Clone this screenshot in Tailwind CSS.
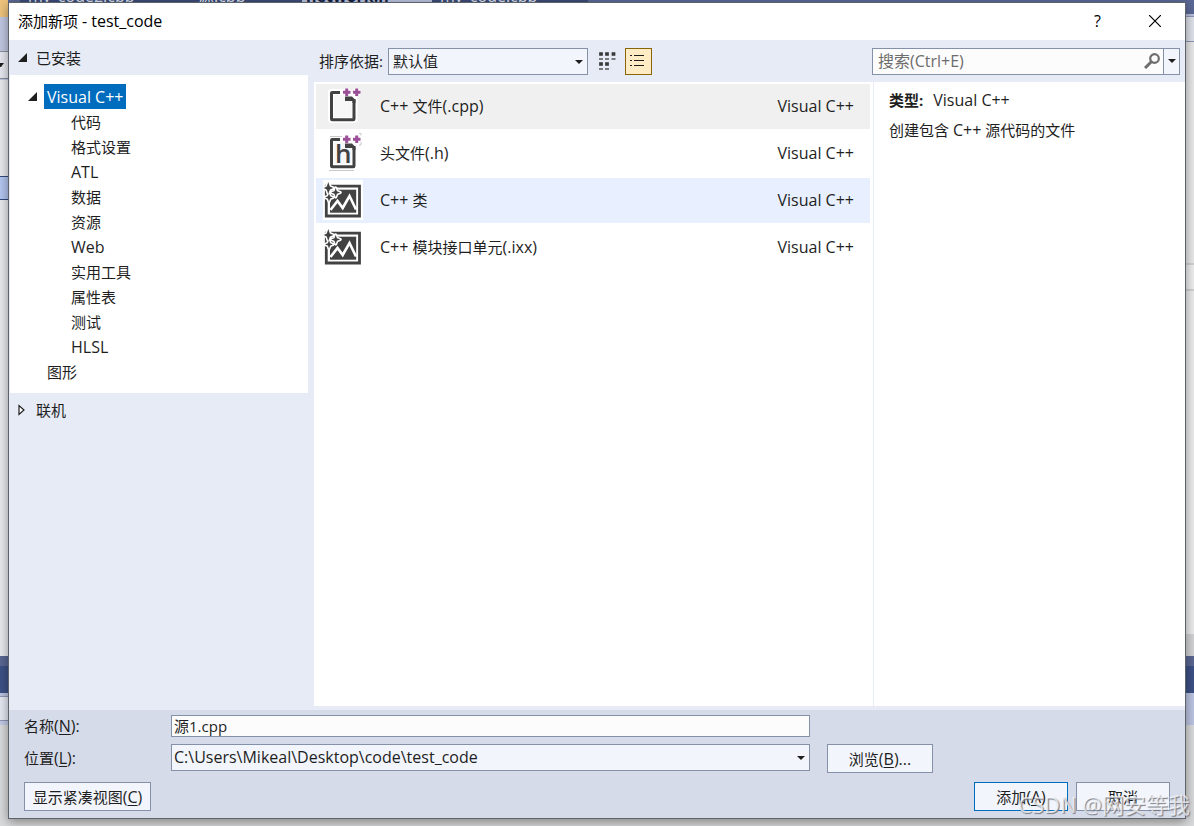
<!DOCTYPE html>
<html lang="zh-CN">
<head>
  <meta charset="UTF-8" />
  <meta name="viewport" content="width=device-width, initial-scale=1.0"/>
  <title>添加新项 - test_code</title>
  <script src="https://cdn.jsdelivr.net/npm/@tailwindcss/browser@4"></script>
</head>
<body class="relative flex h-screen flex-col overflow-hidden bg-[#d9dadb] font-['Open_Sans','Noto_Sans_CJK_SC',sans-serif] text-[15px] leading-5 text-[#1e1e1e]">

  <!-- Shared icons -->
  <svg class="hidden">
    <symbol id="plusplus" viewBox="0 0 40 40">
      <path d="M20 6.300h7.500M23.700 2.500v7.500M30 6.300h7.500M33.700 2.500v7.500" stroke="#fff" stroke-width="5.500"/>
      <path d="M20 6.300h7.500M23.700 2.500v7.500M30 6.300h7.500M33.700 2.500v7.500" stroke="#9b4f96" stroke-width="3"/>
    </symbol>
    <symbol id="page" viewBox="0 0 40 40">
      <path d="M8 6H25L31.500 13V34H8Z" fill="#f7f7f7" stroke="#fff" stroke-width="6" stroke-linejoin="round"/>
      <path d="M17 6.500H9.200Q8.500 6.500 8.500 7.200V33Q8.500 33.700 9.200 33.700H30.300Q31 33.700 31 33V13" fill="none" stroke="#424242" stroke-width="3"/>
      <path d="M22 10.500H29L32.500 14V17H29.500V15H22Z" fill="#424242"/>
    </symbol>
    <symbol id="picture" viewBox="0 0 40 40">
      <path d="M0 0H40V40H0Z" fill="#fff"/>
      <path d="M3.300 6.200H36.500V36H3.300Z" fill="#fff" stroke="#424242" stroke-width="2.800"/>
      <path d="M7 9.700H33.200V32.700H7Z" fill="#424242"/>
      <path d="M7.500 30L14.500 21L19.700 28L26.500 16L33 29.500" fill="none" stroke="#fff" stroke-width="2.600"/>
      <path d="M5.300 2L6.800 6.500L10.300 8L6.800 9.500L5.300 14L3.800 9.500L.8 8L3.800 6.500ZM12.700 8L13.900 11.300L17.200 12.500L13.900 13.700L12.700 17L11.500 13.700L8.200 12.500L11.500 11.300ZM6 13.500L7.100 16.300L9.900 17.400L7.100 18.500L6 21.500L4.900 18.500L2.100 17.400L4.900 16.300Z" fill="#fff" stroke="#fff" stroke-width="3.200" stroke-linejoin="round"/>
      <path d="M5.300 2L6.800 6.500L10.300 8L6.800 9.500L5.300 14L3.800 9.500L.8 8L3.800 6.500ZM12.700 8L13.900 11.300L17.200 12.500L13.900 13.700L12.700 17L11.500 13.700L8.200 12.500L11.500 11.300ZM6 13.500L7.100 16.300L9.900 17.400L7.100 18.500L6 21.500L4.900 18.500L2.100 17.400L4.900 16.300Z" fill="#424242"/>
    </symbol>
    <symbol id="arrow" viewBox="0 0 8 4"><path d="M0 0H8L4 4Z" fill="#1e1e1e"/></symbol>
    <symbol id="expanded" viewBox="0 0 10 10"><path d="M9 0V9H0Z" fill="#1e1e1e"/></symbol>
  </svg>

  <!-- Editor tabs behind the dialog -->
  <div class="flex h-[2px] shrink-0 items-end overflow-hidden bg-[#5a6896] text-base leading-3 text-[#dfe3f0]">
    <div class="h-3 w-2 bg-[#eec37c]"></div>
    <div class="ml-3 flex h-3 w-[170px] bg-[#3b4a78] pl-2">my_code2.cpp</div>
    <div class="flex h-3 w-[112px] bg-[#3b4a78] pl-2">源.cpp</div>
    <div class="flex h-3 w-[130px] bg-[#b8c0dd] pl-1 font-bold text-[#14203f]">network.h ×</div>
    <div class="flex h-3 w-[156px] bg-[#3b4a78] pl-2">my_code.cpp</div>
  </div>

  <div class="flex min-h-0 flex-1">
    <!-- Left edge of the editor -->
    <div class="flex w-2 shrink-0 flex-col bg-[#d9dadb]">
      <div class="h-[15px] bg-[#eec37c]"></div>
      <div class="h-[34px] bg-[#c0c8e2]"></div>
      <div class="flex h-7 items-center border-y border-[#8c909c] bg-[#e6e9f0]"><svg class="h-1 w-1" viewBox="0 0 4 4"><path d="M0 0H4L1 4H0Z" fill="#1e1e1e"/></svg></div>
      <div class="h-[97px] border-t border-[#c0c8e2] bg-[#e9eaed]"></div>
      <div class="h-6 border-y border-[#34497d] bg-[#b4c6f0]"></div>
      <div class="flex-1 bg-[#e9eaed]"></div>
      <div class="h-[10px] bg-[#5a6793]"></div>
      <div class="h-[27px] bg-[#3d5186]"></div>
      <div class="h-[3px] bg-[#b9c2e0]"></div>
      <div class="h-[25px] border-y border-[#8c95b5] bg-[#e4e8f2]"></div>
      <div class="h-1 bg-[#c2c9e6]"></div>
      <div class="h-[94px]"></div>
    </div>

    <!-- Dialog -->
    <main class="z-10 flex min-w-0 flex-1 flex-col border border-[#5e6269] bg-[#e6ebf5] shadow-[0_3px_10px_rgba(0,0,0,0.4)]">
      <header class="flex h-[37px] shrink-0 items-center bg-white pb-[2px] pl-[9px] text-black">
        <h1 class="flex-1">添加新项 <span class="text-base leading-5">- test_code</span></h1>
        <button aria-label="帮助" class="w-[57px] text-base">?</button>
        <button aria-label="关闭" class="flex w-[58px] justify-center">
          <svg class="size-3" viewBox="0 0 12 12"><path d="M0 0L12 12M12 0L0 12" stroke="#000" stroke-width="1.200"/></svg>
        </button>
        <span class="w-px"></span>
      </header>

      <section class="flex min-h-0 flex-1 pb-1">
        <!-- Categories -->
        <nav class="w-[299px] shrink-0">
          <button class="flex h-[35px] w-full items-center gap-2 pl-[9px]"><svg class="size-[10px]"><use href="#expanded"/></svg>已安装</button>
          <div class="ml-px bg-white py-[9px]">
            <button class="flex h-[25px] items-center gap-[6px] pl-[18px]">
              <svg class="size-[10px]"><use href="#expanded"/></svg>
              <span class="h-[25px] bg-[#006cbe] px-[3px] text-base leading-[26px] text-white">Visual C++</span>
            </button>
            <ul class="pl-[61px] leading-[26px]">
              <li class="h-[25px]">代码</li>
              <li class="h-[25px]">格式设置</li>
              <li class="h-[25px] text-base leading-[27px]">ATL</li>
              <li class="h-[25px]">数据</li>
              <li class="h-[25px]">资源</li>
              <li class="h-[25px] text-base leading-[27px]">Web</li>
              <li class="h-[25px]">实用工具</li>
              <li class="h-[25px]">属性表</li>
              <li class="h-[25px]">测试</li>
              <li class="h-[25px] text-base leading-[27px]">HLSL</li>
            </ul>
            <p class="h-[25px] pl-[37px] leading-[26px]">图形</p>
          </div>
          <button class="flex h-[33px] w-full items-center gap-[10px] pl-[9px]">
            <svg class="h-3 w-2" viewBox="0 0 8 12"><path d="M1 1.500V10.500L6 6Z" fill="#fff" stroke="#1e1e1e" stroke-width="1.200"/></svg>联机
          </button>
        </nav>

        <!-- Templates -->
        <div class="ml-[6px] flex min-w-0 flex-1 flex-col">
          <div class="flex h-[42px] shrink-0 items-center pl-[5px]">
            <label for="sort" class="mr-[5px]">排序依据:</label>
            <div class="relative">
              <select id="sort" class="block h-[27px] w-[200px] appearance-none border border-[#8591a8] bg-[#f2f5fc] pl-1 leading-[25px]"><option>默认值</option></select>
              <svg class="pointer-events-none absolute top-[12px] right-[5px] h-1 w-2"><use href="#arrow"/></svg>
            </div>
            <button aria-label="中等图标" class="ml-[10px]">
              <svg class="h-5 w-[19px]" viewBox="0 0 19 20">
                <path d="M2 2h2v2H2ZM8 2h2v2H8ZM14.500 2h2v2h-2ZM2 12h2v2H2ZM8 12h2v2H8Z" fill="none" stroke="#333" stroke-width="1.700"/>
                <path d="M1 8h4M7 8h4M13.500 8h4M1 18h4M7 18h4" stroke="#555" stroke-width="1.500"/>
              </svg>
            </button>
            <button aria-label="小图标" class="ml-2 flex size-[27px] items-center justify-center border border-[#8a6508] bg-[#ffebc4]">
              <svg class="h-4 w-5" viewBox="0 0 20 16"><path d="M2 2.500h2M6 2.500h10M2 7.500h2M6 7.500h10M2 12.500h2M6 12.500h10" stroke="#1e1e1e"/></svg>
            </button>
          </div>
          <ul class="flex flex-1 flex-col gap-[2px] bg-white py-[2px] pr-[3px] pl-[2px] text-base leading-5">
            <li class="flex h-[45px] items-center bg-[#f0f0f0] pr-4 pb-[2px] pl-[7px]">
              <svg class="mr-[17px] size-10"><use href="#page"/><use href="#plusplus"/></svg>
              <span class="flex-1">C++ <span class="text-[15px]">文件</span>(.cpp)</span><span>Visual C++</span>
            </li>
            <li class="flex h-[45px] items-center pr-4 pb-[2px] pl-[7px]">
              <svg class="mr-[17px] size-10" viewBox="0 0 40 40">
                <use href="#page"/>
                <path d="M7 3.500H19M6 37.500H31M36 .5h2v2M38 9v3h-2" fill="none" stroke="#c8c8c8"/>
                <use href="#plusplus"/>
                <text x="12" y="29.500" font-family="Open Sans" font-size="26" font-weight="600" fill="#424242">h</text>
              </svg>
              <span class="flex-1"><span class="text-[15px]">头文件</span>(.h)</span><span>Visual C++</span>
            </li>
            <li class="flex h-[45px] items-center bg-[#e8f0ff] pr-4 pb-[2px] pl-[7px]">
              <svg class="mr-[17px] size-10"><use href="#picture"/></svg>
              <span class="flex-1">C++ <span class="text-[15px]">类</span></span><span>Visual C++</span>
            </li>
            <li class="flex h-[45px] items-center pr-4 pb-[2px] pl-[7px]">
              <svg class="mr-[17px] size-10"><use href="#picture"/></svg>
              <span class="flex-1">C++ <span class="text-[15px]">模块接口单元</span>(.ixx)</span><span>Visual C++</span>
            </li>
          </ul>
        </div>

        <!-- Search and description -->
        <aside class="flex w-[312px] shrink-0 flex-col">
          <div class="-ml-px flex h-[42px] shrink-0 items-center pr-[5px]">
            <div class="flex h-[27px] w-full border border-[#8591a8] bg-[#fcfcfc]">
              <input type="text" aria-label="搜索" placeholder="搜索(Ctrl+E)" class="min-w-0 flex-1 pl-[5px] text-base outline-none placeholder:text-[#6d6d6d]"/>
              <button aria-label="搜索" class="flex w-[19px] items-center">
                <svg class="size-4" viewBox="0 0 16 16"><circle cx="10.500" cy="5.500" r="4.300" fill="none" stroke="#6d6d6d" stroke-width="2.200"/><path d="M7.300 8.700L1 15" stroke="#6d6d6d" stroke-width="3"/></svg>
              </button>
              <button aria-label="搜索选项" class="flex w-4 items-center justify-center border-l border-[#8591a8] bg-[#f2f5fc]"><svg class="h-1 w-2"><use href="#arrow"/></svg></button>
            </div>
          </div>
          <div class="flex-1 border-l border-[#e6ebf5] bg-white pt-2 pl-[15px]">
            <p class="mb-[10px]"><b class="mr-[10px]">类型:</b><span class="text-base leading-5">Visual C++</span></p>
            <p>创建包含 <span class="text-base leading-5">C++</span> 源代码的文件</p>
          </div>
        </aside>
      </section>

      <!-- Name and location -->
      <footer class="shrink-0 bg-[#d6dbe9] px-[15px] pt-[5px] pb-[7px]">
        <div class="mb-[7px] flex h-[22px] items-center">
          <label for="name" class="w-[147px]">名称<span class="text-base leading-5">(<u class="underline-offset-2">N</u>):</span></label>
          <input id="name" type="text" value="源1.cpp" class="mr-[360px] h-[22px] min-w-0 flex-1 border border-[#8591a8] bg-[#fcfcfc] pb-[2px] pl-[2px]"/>
        </div>
        <div class="mb-[9px] flex h-[29px] items-start">
          <label for="location" class="w-[147px] pt-1">位置<span class="text-base leading-5">(<u class="underline-offset-2">L</u>):</span></label>
          <div class="relative min-w-0 flex-1">
            <select id="location" class="block h-[27px] w-full appearance-none border border-[#8591a8] bg-[#f2f5fc] pl-[2px] text-base leading-[25px]"><option>C:\Users\Mikeal\Desktop\code\test_code</option></select>
            <svg class="pointer-events-none absolute top-[12px] right-[5px] h-1 w-2"><use href="#arrow"/></svg>
          </div>
          <button class="mr-[237px] ml-[17px] h-[29px] w-[106px] border border-[#8591a8] bg-[#f2f5fc]">浏览<span class="text-base leading-5">(<u class="underline-offset-2">B</u>)...</span></button>
        </div>
        <div class="flex h-[29px] gap-2">
          <button class="mr-auto w-[127px] border border-[#8591a8] bg-[#f2f5fc]">显示紧凑视图<span class="text-base leading-5">(<u class="underline-offset-2">C</u>)</span></button>
          <button class="w-[94px] border border-[#006cbe] bg-[#f2f5fc]">添加<span class="text-base leading-5">(<u class="underline-offset-2">A</u>)</span></button>
          <button class="w-[94px] border border-[#8591a8] bg-[#f2f5fc]">取消</button>
        </div>
      </footer>
    </main>

    <!-- Right edge of the editor -->
    <div class="flex w-2 shrink-0 flex-col bg-[#d9dadb]">
      <div class="h-3 bg-[#5a6896]"></div>
      <div class="h-[2px] bg-[#b7c0dc]"></div>
      <div class="h-[26px] border-y border-[#8c95b5] bg-[#dfe2ea]"></div>
      <div class="h-[221px] bg-[#e9e9e9]"></div>
      <div class="h-7 border-y-2 border-[#d2d2d4] bg-[#eeeeef]"></div>
      <div class="flex-1 bg-[#ececec]"></div>
      <div class="h-[22px] bg-[#d3d3d5]"></div>
      <div class="h-[10px] bg-[#5a6793]"></div>
      <div class="h-[27px] bg-[#3d5186]"></div>
      <div class="h-8 bg-[#bcc5e2]"></div>
      <div class="h-[94px]"></div>
    </div>
  </div>
  <div class="h-[7px] shrink-0"></div>

  <!-- Watermark -->
  <p class="pointer-events-none absolute right-1 bottom-2 z-20 text-[22px] leading-7 text-white/70 [text-shadow:1px_1px_1px_#777b86]">CSDN @网安等我</p>

</body>
</html>
